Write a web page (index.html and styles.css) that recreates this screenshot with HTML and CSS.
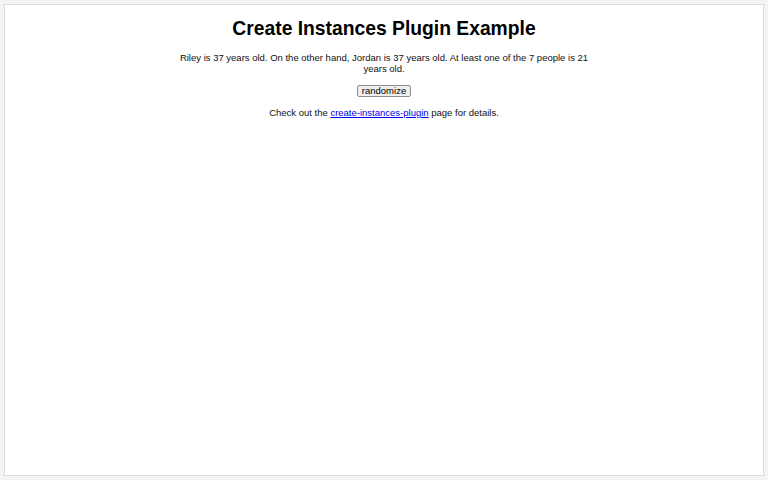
FILE: index.html
```html
<!DOCTYPE html>
<html>
<head>
<meta charset="utf-8">
<link rel="stylesheet" href="styles.css">
</head>
<body>
<div class="page">
  <h1 class="title">Create Instances Plugin Example</h1>
  <p class="sentence">Riley is 37 years old. On the other hand, Jordan is 37 years old. At least one of the 7 people is 21 years old.</p>
  <div class="actions"><button class="btn">randomize</button></div>
  <p class="note">Check out the <a href="#">create-instances-plugin</a> page for details.</p>
</div>
</body>
</html>
```
FILE: styles.css
```css
html, body {
  margin: 0;
  padding: 0;
  background: #f3f3f3;
  font-family: "Liberation Sans", Arial, sans-serif;
}
body {
  padding: 4px;
  height: 480px;
  box-sizing: border-box;
}
.page {
  background: #fff;
  border: 1px solid #dcdcdc;
  height: 472px;
  box-sizing: border-box;
  text-align: center;
  padding-top: 12px;
}
.title {
  margin: 0;
  font-size: 19.3px;
  font-weight: bold;
  line-height: 23px;
  color: #000;
}
.sentence {
  font-size: 9.5px;
  line-height: 11px;
  max-width: 420px;
  margin: 12px auto 0;
  color: #111;
}
.actions {
  margin-top: 11px;
  display: flex;
  justify-content: center;
}
.btn {
  font-family: "Liberation Sans", Arial, sans-serif;
  font-size: 9.5px;
  line-height: 10px;
  height: 12px;
  padding: 0 4px;
  border: 1px solid #8f8f8f;
  background: #efefef;
  border-radius: 2px;
  color: #000;
  box-sizing: border-box;
}
.note {
  font-size: 9.5px;
  line-height: 11px;
  margin: 10px 0 0;
  color: #111;
}
.note a {
  color: #0000ee;
}
```
